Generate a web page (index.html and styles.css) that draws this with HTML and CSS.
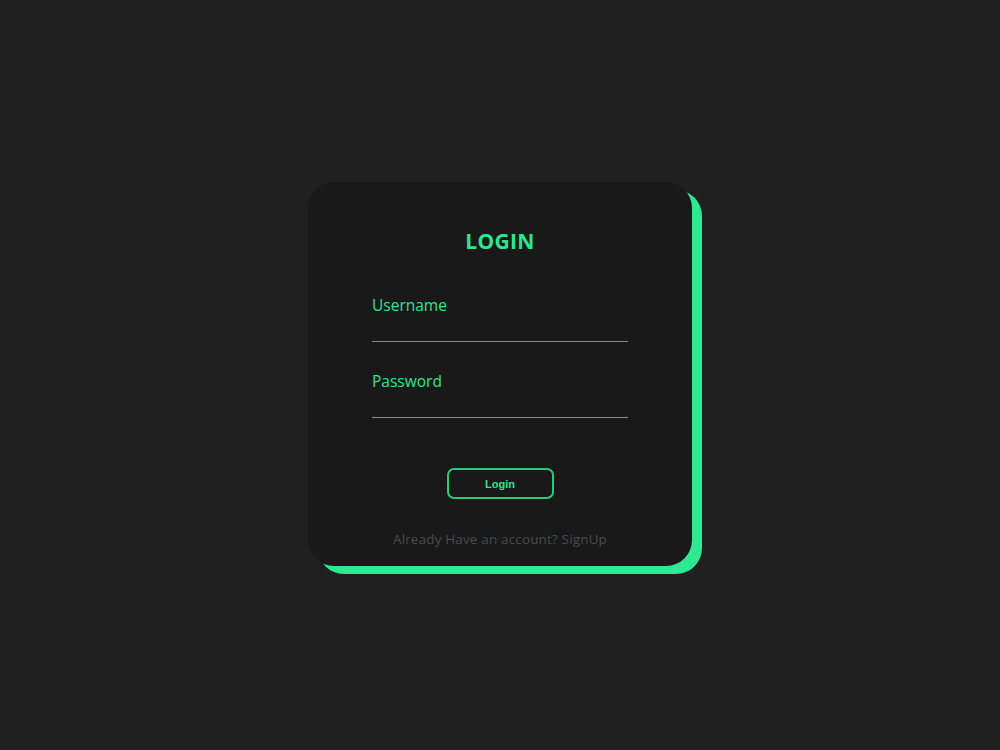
FILE: index.html
```html
<!DOCTYPE html>
<html lang="en">
<head>
<meta charset="utf-8">
<title>Login</title>
<link rel="stylesheet" href="styles.css">
</head>
<body>
  <main class="page">
    <form class="card">
      <h1 class="title">LOGIN</h1>
      <div class="field">
        <label class="label" for="user">Username</label>
        <input class="input" id="user" type="text">
      </div>
      <div class="field field-second">
        <label class="label" for="pass">Password</label>
        <input class="input" id="pass" type="password">
      </div>
      <button class="btn" type="button">Login</button>
      <p class="footer">Already Have an account? SignUp</p>
    </form>
  </main>
</body>
</html>
```
FILE: styles.css
```css
* { box-sizing: border-box; }
html, body {
  margin: 0;
  padding: 0;
  height: 100%;
}
body {
  background: #202020;
  font-family: "Open Sans", "Liberation Sans", sans-serif;
}
.page {
  height: 100vh;
  display: flex;
  align-items: center;
  justify-content: center;
}
.card {
  width: 384px;
  height: 384px;
  margin-top: -2px;
  background: #191919;
  border-radius: 26px;
  box-shadow: 10px 8px 0 #2ee991;
  display: flex;
  flex-direction: column;
  align-items: center;
  padding-top: 44px;
}
.title {
  margin: 0;
  font-size: 21px;
  line-height: 30px;
  font-weight: 700;
  color: #2ee58f;
  letter-spacing: 0.3px;
}
.field {
  width: 256px;
  margin-top: 39px;
  display: flex;
  flex-direction: column;
}
.field-second { margin-top: 29px; }
.label {
  font-size: 15.5px;
  line-height: 20px;
  color: #2ee58f;
}
.input {
  height: 27px;
  background: transparent;
  border: none;
  border-bottom: 1px solid #8a8a8a;
  outline: none;
  color: #ddd;
  padding: 0;
}
.btn {
  margin-top: 50px;
  width: 107px;
  height: 31px;
  background: transparent;
  border: 2px solid #2bc97d;
  border-radius: 7px;
  color: #2ee58f;
  font-family: "Liberation Sans", Arial, sans-serif;
  font-weight: 700;
  font-size: 11px;
}
.footer {
  margin: 30px 0 0;
  font-size: 13.5px;
  line-height: 20px;
  color: #4b4b4b;
  letter-spacing: 0.15px;
}
```
